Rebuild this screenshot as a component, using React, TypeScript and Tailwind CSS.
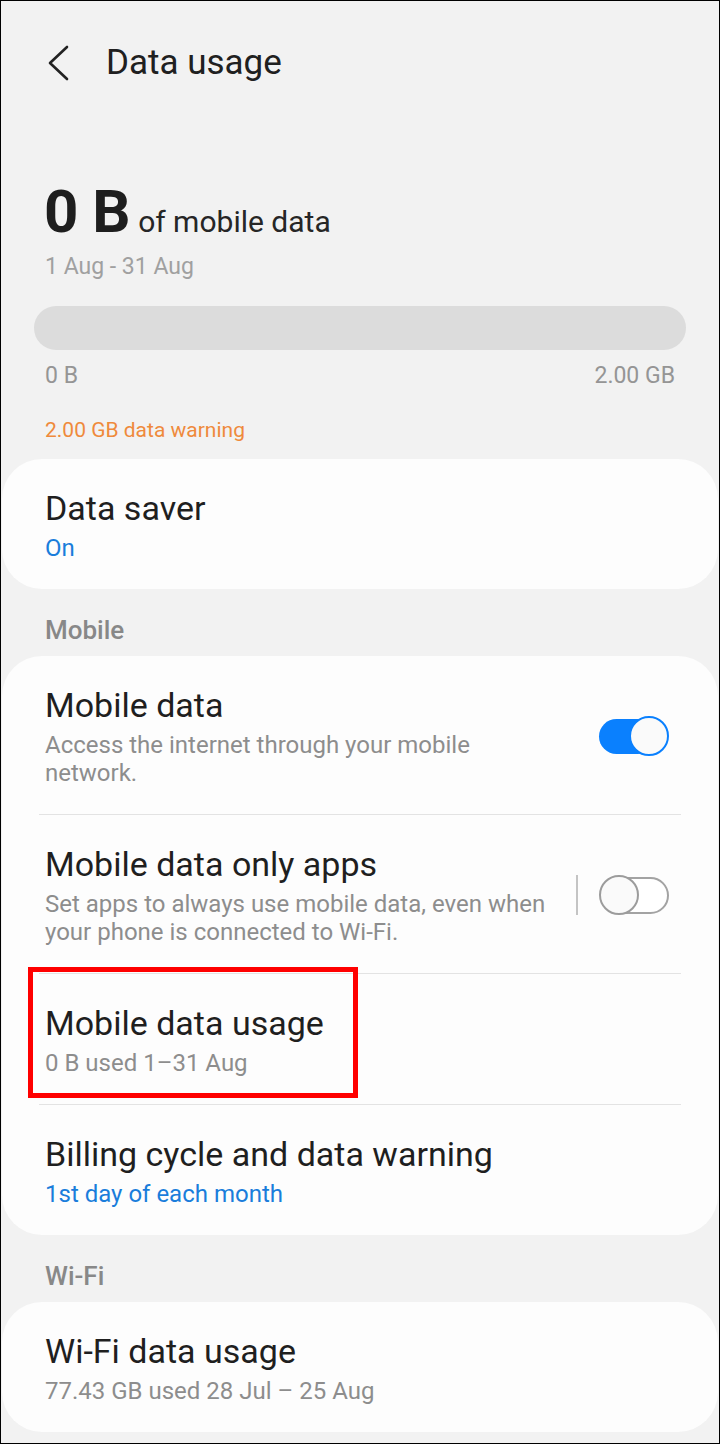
import React from "react";

const font = { fontFamily: "Roboto, 'Noto Sans', Arial, sans-serif" };

function ToggleOn() {
  return (
    <div className="relative w-[70px] h-[40px] shrink-0">
      <div className="absolute left-0 top-[3px] w-[56px] h-[35px] rounded-full bg-[#0a80fe]" />
      <div className="absolute right-0 top-0 w-[40px] h-[40px] rounded-full bg-[#fafafa] border-2 border-[#0a80fe]" />
    </div>
  );
}

function ToggleOff() {
  return (
    <div className="relative w-[70px] h-[40px] shrink-0">
      <div className="absolute left-[2px] top-[2px] w-[68px] h-[37px] rounded-full bg-white border-2 border-[#a3a3a3]" />
      <div className="absolute left-0 top-0 w-[40px] h-[40px] rounded-full bg-[#fafafa] border-2 border-[#9c9c9c]" />
    </div>
  );
}

function Row({
  title,
  sub,
  subClass = "text-[#8d8d8d]",
  right,
  children,
}: {
  title: string;
  sub: React.ReactNode;
  subClass?: string;
  right?: React.ReactNode;
  children?: React.ReactNode;
}) {
  return (
    <div className="relative flex items-center pl-[43px] pr-[49px] pt-[29px] pb-[27px]">
      <div className="flex-1 min-w-0">
        <div className="text-[34px] leading-[40px] text-[#1f1f1f] whitespace-nowrap">{title}</div>
        <div className={`mt-[6px] text-[24px] leading-[28px] ${subClass}`}>{sub}</div>
      </div>
      {right}
      {children}
    </div>
  );
}

function Divider() {
  return <div className="mx-[37px] h-px bg-[#e3e3e3]" />;
}

export default function App() {
  return (
    <div
      className="w-[720px] h-[1444px] bg-[#f2f2f2] border border-black overflow-hidden"
      style={font}
    >
      {/* Header */}
      <div className="mt-[42px] h-[40px] flex items-center pl-[46px]">
        <svg width="24" height="36" viewBox="0 0 24 36" className="shrink-0">
          <polyline
            points="20,2 3,18 20,34"
            fill="none"
            stroke="#222"
            strokeWidth="2.6"
            strokeLinecap="round"
            strokeLinejoin="round"
          />
        </svg>
        <div className="ml-[35px] text-[35px] leading-[40px] text-[#202020]">Data usage</div>
      </div>

      {/* Usage summary */}
      <div className="mt-[99px] h-[60px] flex items-baseline pl-[43px] leading-[60px]">
        <span className="text-[60px] font-bold text-[#1e1e1e] tracking-[-0.5px]">0 B</span>
        <span className="ml-[8px] text-[30px] text-[#262626]">of mobile data</span>
      </div>
      <div className="mt-[11px] pl-[44px] text-[23px] leading-[28px] text-[#a0a0a0]">1 Aug - 31 Aug</div>

      <div className="mt-[25px] mx-[33px] h-[44px] rounded-full bg-[#dcdcdc]" />

      <div className="mt-[12px] px-[44px] flex justify-between text-[23px] leading-[28px] text-[#959595]">
        <span>0 B</span>
        <span>2.00 GB</span>
      </div>

      <div className="mt-[27px] pl-[44px] text-[21px] leading-[26px] text-[#ef8a3c]">
        2.00 GB data warning
      </div>

      {/* Data saver card */}
      <div className="mt-[16px] mx-px rounded-[40px] bg-[#fdfdfd]">
        <Row title="Data saver" sub="On" subClass="text-[#1a7ddb]" />
      </div>

      <div className="mt-[26px] pl-[44px] text-[26px] leading-[30px] font-medium text-[#888888]">Mobile</div>

      {/* Mobile card */}
      <div className="mt-[11px] mx-px rounded-[40px] bg-[#fdfdfd]">
        <Row
          title="Mobile data"
          sub={
            <>
              Access the internet through your mobile
              <br />
              network.
            </>
          }
          right={<ToggleOn />}
        />
        <Divider />
        <Row
          title="Mobile data only apps"
          sub={
            <>
              Set apps to always use mobile data, even when
              <br />
              your phone is connected to Wi-Fi.
            </>
          }
          right={
            <div className="flex items-center shrink-0">
              <div className="w-[2px] h-[40px] bg-[#c4c4c4] mr-[21px]" />
              <ToggleOff />
            </div>
          }
        />
        <Divider />
        <Row title="Mobile data usage" sub="0 B used 1–31 Aug">
          <div className="absolute left-[26px] top-[-7px] w-[330px] h-[131px] border-[5px] border-[#ff0000] pointer-events-none" />
        </Row>
        <Divider />
        <Row title="Billing cycle and data warning" sub="1st day of each month" subClass="text-[#1a7ddb]" />
      </div>

      <div className="mt-[26px] pl-[44px] text-[26px] leading-[30px] font-medium text-[#888888]">Wi-Fi</div>

      {/* Wi-Fi card */}
      <div className="mt-[11px] mx-px rounded-[40px] bg-[#fdfdfd]">
        <Row title="Wi-Fi data usage" sub="77.43 GB used 28 Jul – 25 Aug" />
      </div>
    </div>
  );
}
